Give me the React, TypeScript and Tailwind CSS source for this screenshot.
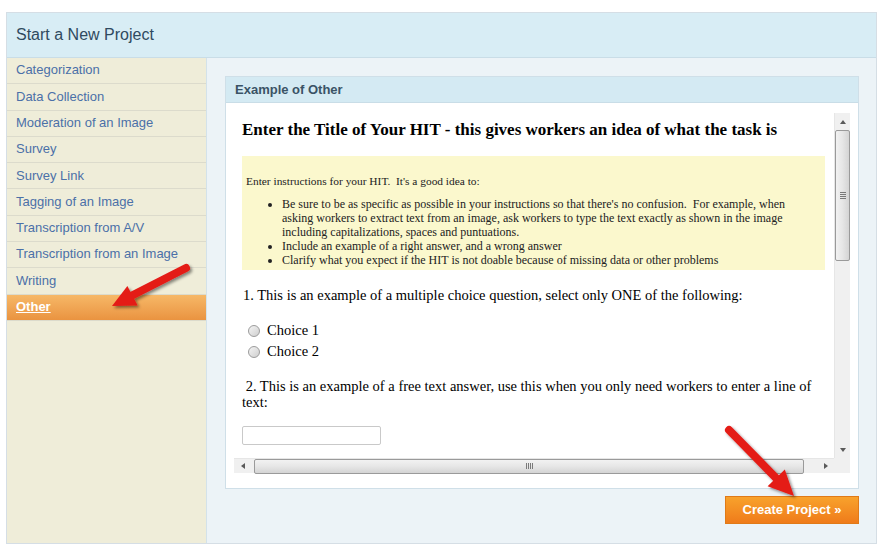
import React from 'react';

const categories = [
  'Categorization',
  'Data Collection',
  'Moderation of an Image',
  'Survey',
  'Survey Link',
  'Tagging of an Image',
  'Transcription from A/V',
  'Transcription from an Image',
  'Writing',
  'Other',
];

function Radio() {
  return (
    <span className="inline-block w-[12px] h-[12px] rounded-full border border-[#9c9c9c] bg-gradient-to-br from-[#f4f4f4] to-[#cfcfcf] mr-[7px] shrink-0" />
  );
}

function VScrollbar() {
  return (
    <div className="w-[16px] h-full bg-[#f0f0f0] border-l border-[#e6e6e6] flex flex-col items-center">
      <div className="h-[17px] w-full flex items-center justify-center">
        <div className="w-0 h-0 border-l-[3px] border-r-[3px] border-b-[4px] border-l-transparent border-r-transparent border-b-[#5a5a5a]" />
      </div>
      <div className="w-[15px] h-[131px] rounded-[2px] border border-[#9a9a9a] bg-gradient-to-r from-[#f2f2f2] via-[#e6e6e6] to-[#d4d4d4] flex flex-col items-center justify-center gap-[1px]">
        <div className="w-[6px] h-[1px] bg-[#7a7a7a]" />
        <div className="w-[6px] h-[1px] bg-[#7a7a7a]" />
        <div className="w-[6px] h-[1px] bg-[#7a7a7a]" />
        <div className="w-[6px] h-[1px] bg-[#7a7a7a]" />
      </div>
      <div className="flex-1" />
      <div className="h-[17px] w-full flex items-center justify-center">
        <div className="w-0 h-0 border-l-[3px] border-r-[3px] border-t-[4px] border-l-transparent border-r-transparent border-t-[#5a5a5a]" />
      </div>
    </div>
  );
}

function HScrollbar() {
  return (
    <div className="h-[15px] w-full bg-[#f0f0f0] border-t border-[#e6e6e6] flex items-center">
      <div className="w-[17px] h-full flex items-center justify-center">
        <div className="w-0 h-0 border-t-[3px] border-b-[3px] border-r-[4px] border-t-transparent border-b-transparent border-r-[#5a5a5a]" />
      </div>
      <div className="ml-[3px] w-[550px] h-[15px] rounded-[2px] border border-[#9a9a9a] bg-gradient-to-b from-[#f2f2f2] via-[#e6e6e6] to-[#d4d4d4] flex items-center justify-center gap-[1px]">
        <div className="w-[1px] h-[6px] bg-[#7a7a7a]" />
        <div className="w-[1px] h-[6px] bg-[#7a7a7a]" />
        <div className="w-[1px] h-[6px] bg-[#7a7a7a]" />
        <div className="w-[1px] h-[6px] bg-[#7a7a7a]" />
      </div>
      <div className="flex-1" />
      <div className="w-[17px] h-full flex items-center justify-center">
        <div className="w-0 h-0 border-t-[3px] border-b-[3px] border-l-[4px] border-t-transparent border-b-transparent border-l-[#5a5a5a]" />
      </div>
    </div>
  );
}

function Arrows() {
  return (
    <svg className="absolute inset-0 pointer-events-none" width="881" height="549">
      <defs>
        <filter id="shadow" x="-20%" y="-20%" width="140%" height="140%">
          <feDropShadow dx="2" dy="2" stdDeviation="1.5" floodColor="#000" floodOpacity="0.45" />
        </filter>
      </defs>
      <g filter="url(#shadow)">
        <line x1="186" y1="268" x2="131" y2="296" stroke="#e41b17" strokeWidth="8" strokeLinecap="round" />
        <polygon points="112,306 137.6,305.6 127.4,286" fill="#e41b17" />
      </g>
      <g filter="url(#shadow)">
        <line x1="729" y1="430" x2="777" y2="479" stroke="#e41b17" strokeWidth="8" strokeLinecap="round" />
        <polygon points="794,496 767.6,486.3 784.8,469.5" fill="#e41b17" />
      </g>
    </svg>
  );
}

export default function App() {
  const serif = { fontFamily: '"Liberation Serif", "Times New Roman", serif' };
  return (
    <div className="relative w-[881px] h-[549px] bg-white overflow-hidden" style={{ fontFamily: '"Liberation Sans", Arial, sans-serif' }}>
      <div className="absolute left-[6px] top-[12px] w-[871px] h-[532px] border border-[#d5dee5] flex flex-col">
        {/* Header */}
        <div className="h-[45px] bg-[#d8edf5] border-b border-[#c9dde7] flex items-center px-[9px] shrink-0">
          <span className="text-[16px] text-[#2f4a60]">Start a New Project</span>
        </div>

        <div className="flex flex-1 min-h-0">
          {/* Sidebar */}
          <div className="w-[200px] bg-[#efedd9] border-r border-[#d3e2ea] shrink-0">
            {categories.map((c) => (
              <div
                key={c}
                className={`h-[26.3px] flex items-center px-[9px] pb-[1px] border-b border-[#dcdbcc] text-[13px] ${
                  c === 'Other'
                    ? 'bg-gradient-to-b from-[#f6b867] to-[#ea9340] text-white font-bold underline'
                    : 'text-[#4b70a8]'
                }`}
              >
                {c}
              </div>
            ))}
          </div>

          {/* Main */}
          <div className="flex-1 bg-[#ecf3f7] pl-[18px] pr-[17px] pt-[18px] flex flex-col">
            <div className="border border-[#cfdfe8] bg-white">
              <div className="h-[26px] bg-[#d4eaf3] border-b border-[#c9dde7] flex items-center px-[9px]">
                <span className="text-[13px] font-bold text-[#3a5366]">Example of Other</span>
              </div>
              <div className="pl-[8px] pr-[7px] pt-[10px] pb-[15px]">
                <div className="w-[616px] h-[360px] flex flex-col">
                  <div className="flex flex-1 min-h-0">
                    <div className="w-[600px] h-full overflow-hidden pl-[8px]" style={serif}>
                      <div className="pt-[7px] text-[17px] leading-[20px] font-bold text-black whitespace-nowrap">
                        Enter the Title of Your HIT - this gives workers an idea of what the task is
                      </div>
                      <div className="mt-[16px] w-[583px] bg-[#fbf8cd] pl-[4px] pt-[18px] pb-[3px] leading-[14px] text-[#222] whitespace-pre-wrap">
                        <div className="text-[11.4px]">Enter instructions for your HIT.  It's a good idea to:</div>
                        <ul className="mt-[9px] pl-[36px] pr-[30px] list-disc text-[12px]">
                          <li>
                            Be sure to be as specific as possible in your instructions so that there's no confusion.  For example, when asking workers to extract text from an image, ask workers to type the text exactly as shown in the image including capitalizations, spaces and puntuations.
                          </li>
                          <li>Include an example of a right answer, and a wrong answer</li>
                          <li>Clarify what you expect if the HIT is not doable because of missing data or other problems</li>
                        </ul>
                      </div>
                      <div className="mt-[16px] text-[14.5px] leading-[18px] text-black whitespace-nowrap pl-[1px]">
                        1. This is an example of a multiple choice question, select only ONE of the following:
                      </div>
                      <div className="mt-[16px] pl-[6px] text-[14.5px] text-black">
                        <div className="h-[21px] flex items-center"><Radio />Choice 1</div>
                        <div className="h-[21px] flex items-center"><Radio />Choice 2</div>
                      </div>
                      <div className="mt-[16px] text-[14.5px] leading-[16px] text-black w-[580px]">
                        &nbsp;2. This is an example of a free text answer, use this when you only need workers to enter a line of text:
                      </div>
                      <div className="mt-[16px] w-[139px] h-[19px] border border-[#c9c9c9] rounded-[2px] bg-white" />
                    </div>
                    <VScrollbar />
                  </div>
                  <div className="flex">
                    <div className="w-[600px]"><HScrollbar /></div>
                    <div className="w-[16px] h-[15px] bg-[#f0f0f0]" />
                  </div>
                </div>
              </div>
            </div>
            <div className="flex justify-end mt-[7px]">
              <button className="w-[134px] h-[28px] bg-gradient-to-b from-[#f8a22c] to-[#ef7b1a] border border-[#e07a18] text-white text-[13px] font-bold">
                Create Project »
              </button>
            </div>
          </div>
        </div>
      </div>
      <Arrows />
    </div>
  );
}
